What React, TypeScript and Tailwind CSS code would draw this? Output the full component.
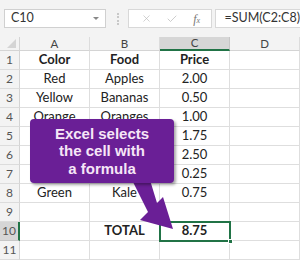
import { X, Check } from "lucide-react";

const cols = ["A", "B", "C", "D"];

// rows 5-7 of A/B sit under the callout in the source shot
const rows: [string, string, string, boolean?][] = [
  ["Color", "Food", "Price", true],
  ["Red", "Apples", "2.00"],
  ["Yellow", "Bananas", "0.50"],
  ["Orange", "Oranges", "1.00"],
  ["", "", "1.75"],
  ["", "", "2.50"],
  ["", "", "0.25"],
  ["Green", "Kale", "0.75"],
  ["", "", ""],
  ["", "TOTAL", "8.75", true],
  ["", "", ""],
];

export default function App() {
  return (
    <div className="relative w-[300px] h-[260px] overflow-hidden bg-white font-['Lato','Liberation_Sans',sans-serif] text-[#222]">
      {/* formula bar */}
      <div className="flex items-center h-[37px] bg-[#f3f3f3] pl-[4px]">
        <div className="flex items-center justify-between w-[106px] h-[19px] bg-white border border-[#d0d0d0] pl-[6px] pr-[6px]">
          <span className="text-[12.5px] text-[#333]">C10</span>
          <span className="w-0 h-0 border-l-[3px] border-r-[3px] border-t-[3px] border-l-transparent border-r-transparent border-t-[#888]" />
        </div>
        <div className="ml-[11px] h-[12px] w-[3px] border-l-2 border-dotted border-[#c8c8c8]" />
        <div className="ml-[8px] flex items-center justify-around w-[87px] h-[19px] bg-white border border-[#d8d8d8] px-[4px]">
          <X size={11} strokeWidth={1.4} className="text-[#b8b8b8]" />
          <Check size={12} strokeWidth={1.4} className="text-[#b8b8b8]" />
          <span className="font-['Liberation_Serif',serif] italic text-[12px] text-[#777] leading-none">
            f<span className="text-[8px]">x</span>
          </span>
        </div>
        <div className="ml-[3px] flex-1 h-[19px] bg-white border border-[#d8d8d8] border-r-0 pl-[8px] flex items-center">
          <span className="text-[12.5px] text-[#333]">=SUM(C2:C8)</span>
        </div>
      </div>

      {/* grid */}
      <div className="grid grid-cols-[20px_70px_70px_70px_70px] grid-rows-[14px_repeat(11,19px)]">
        <div className="bg-[#f3f3f3] border-b border-r border-[#d4d4d4] flex items-end justify-end pr-[3px] pb-[2px]">
          <svg width="9" height="9" viewBox="0 0 9 9">
            <polygon points="9,0 9,9 0,9" fill="#d4d4d4" />
          </svg>
        </div>
        {cols.map((c) => (
          <div
            key={c}
            className={
              c === "C"
                ? "bg-[#d6d6d6] border-b-2 border-b-[#217346] border-r border-r-[#c6c6c6] flex items-center justify-center text-[11.5px] text-[#444]"
                : "bg-[#f3f3f3] border-b border-b-[#d4d4d4] border-r border-r-[#dcdcdc] flex items-center justify-center text-[11.5px] text-[#444]"
            }
          >
            {c}
          </div>
        ))}
        {rows.map((r, i) => {
          const n = i + 1;
          const bold = r[3];
          return [
            <div
              key={"h" + n}
              className={
                n === 10
                  ? "bg-[#d6d6d6] border-r-2 border-r-[#217346] border-b border-b-[#c6c6c6] flex items-center justify-center text-[12px] text-[#555]"
                  : "bg-[#f3f3f3] border-r border-r-[#d4d4d4] border-b border-b-[#dcdcdc] flex items-center justify-center text-[12px] text-[#555]"
              }
            >
              {n}
            </div>,
            ...[0, 1, 2].map((j) => (
              <div
                key={n + "-" + j}
                className={
                  "border-r border-b border-[#dedede] flex items-center justify-center text-[13px] " +
                  (bold ? "font-bold" : "")
                }
              >
                {r[j]}
              </div>
            )),
            <div key={n + "-d"} className="border-r border-b border-[#dedede]" />,
          ];
        })}
      </div>

      {/* active cell C10 */}
      <div className="absolute left-[159px] top-[221px] w-[72px] h-[21px] border-2 border-[#217346]">
        <span className="absolute -right-[4px] -bottom-[4px] w-[5px] h-[5px] bg-[#217346] border border-white" />
      </div>

      {/* callout arrow */}
      <svg className="absolute left-0 top-0" width="300" height="260">
        <polygon
          points="132,180 150,180 157,203 163,197 173,229 140,220 148,212"
          fill="#6a1f96"
        />
      </svg>

      {/* callout box */}
      <div className="absolute left-[30px] top-[119px] w-[144px] h-[64px] rounded-[4px] bg-[#6a1f96] shadow-[2px_2px_3px_rgba(0,0,0,0.35)] flex flex-col items-center justify-center font-['Liberation_Sans',sans-serif] font-bold text-[15px] leading-[17.5px] text-[#f6e6f7]">
        <span>Excel selects</span>
        <span>the cell with</span>
        <span>a formula</span>
      </div>
    </div>
  );
}
